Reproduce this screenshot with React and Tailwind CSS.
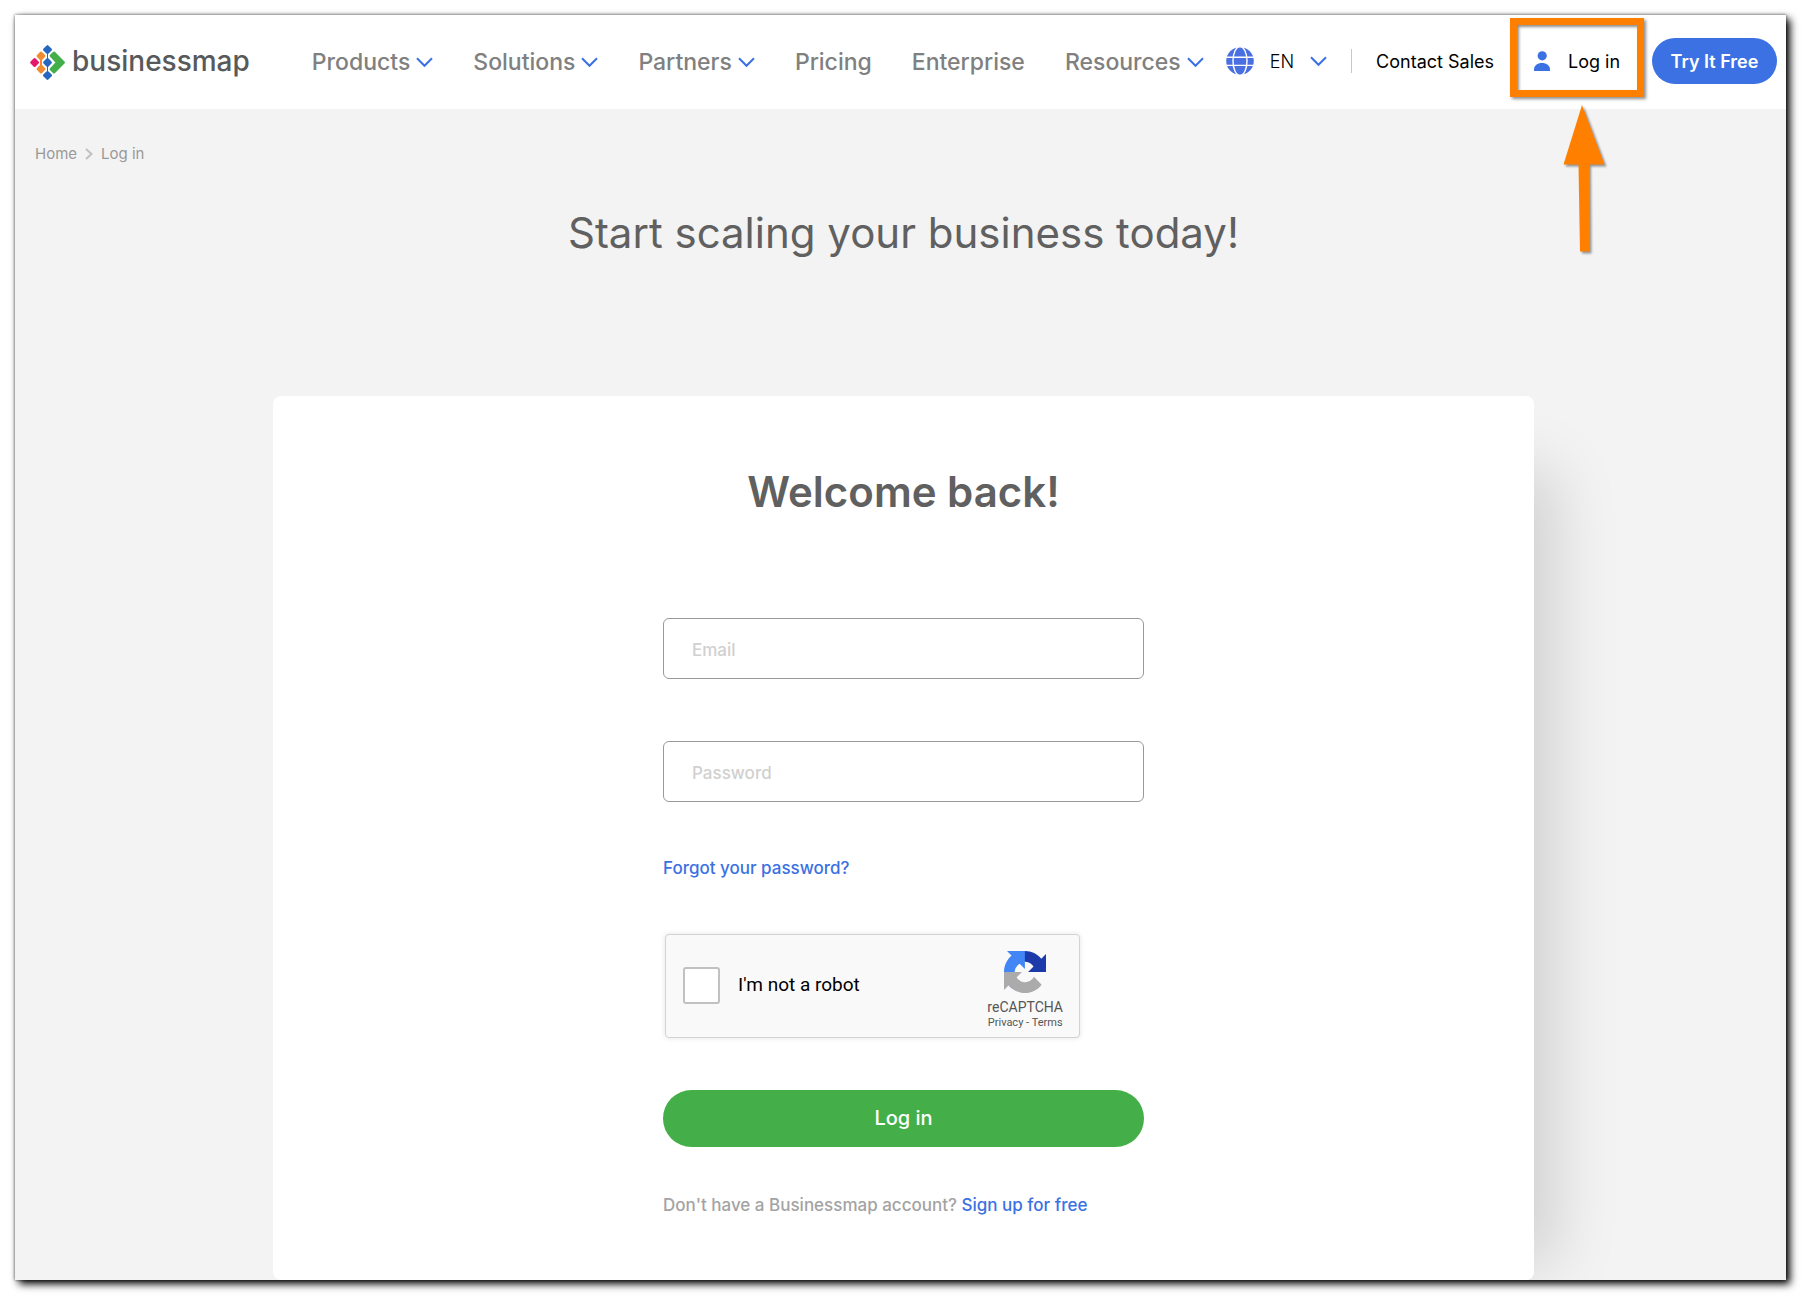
import React, { useState } from 'react';

const navItems = [
  { label: 'Products', menu: true },
  { label: 'Solutions', menu: true },
  { label: 'Partners', menu: true },
  { label: 'Pricing', menu: false },
  { label: 'Enterprise', menu: false },
  { label: 'Resources', menu: true },
];

const ChevronDown = () => (
  <svg width="17" height="11" viewBox="0 0 17 11" fill="none" className="shrink-0" aria-hidden="true">
    <path d="M1 1.2 8.5 8.8 16 1.2" stroke="#3b71e3" strokeWidth="2" />
  </svg>
);

const LogoMark = () => (
  <svg width="35" height="35" viewBox="0 0 35 35" className="shrink-0" aria-hidden="true">
    <path d="M17.5 4v27" stroke="#2767c0" strokeWidth="1" />
    <path d="M11 11v13" stroke="#f28a30" strokeWidth="2" />
    <g strokeLinejoin="round" strokeWidth="3">
      <path d="M17.5 1.7 20.4 4.6 17.5 7.5 14.6 4.6Z" fill="#2767c0" stroke="#2767c0" />
      <path d="M17.5 14.6 20.4 17.5 17.5 20.4 14.6 17.5Z" fill="#2767c0" stroke="#2767c0" />
      <path d="M17.5 27.5 20.4 30.4 17.5 33.3 14.6 30.4Z" fill="#2767c0" stroke="#2767c0" />
      <path d="M11 8.1 13.9 11 11 13.9 8.1 11Z" fill="#f28a30" stroke="#f28a30" />
      <path d="M11 21.1 13.9 24 11 26.9 8.1 24Z" fill="#f28a30" stroke="#f28a30" />
      <path d="M4.6 14.6 7.5 17.5 4.6 20.4 1.7 17.5Z" fill="#e6186d" stroke="#e6186d" />
      <path d="M24 8 33.4 17.5 24 27 21.2 24.2 27.4 17.5 21.2 10.8Z" fill="#43af49" stroke="#43af49" />
    </g>
  </svg>
);

const GlobeIcon = () => (
  <svg width="28" height="28" viewBox="0 0 28 28" className="shrink-0" aria-hidden="true">
    <circle cx="14" cy="14" r="13.8" fill="#4a6fe0" />
    <g fill="none" stroke="#fff" strokeWidth="1.4">
      <ellipse cx="14" cy="14" rx="7" ry="14.4" />
      <path d="M0 10.2h28M0 18.4h28" />
    </g>
  </svg>
);

const UserIcon = () => (
  <svg width="16" height="20" viewBox="0 0 16 20" fill="#3b71e3" className="shrink-0" aria-hidden="true">
    <circle cx="8.2" cy="4.8" r="4.6" />
    <path d="M0 20v-1.500C0 14.500 3.500 12 8 12s8 2.500 8 6.500V20Z" />
  </svg>
);

const RecaptchaLogo = () => (
  <svg width="42" height="42" viewBox="0 0 64 64" aria-hidden="true">
    <path fill="#1c3aa9" d="M64 31.955l-.033-1.370V4.687l-7.160 7.160C50.948 4.674 42.033.093 32.050.093c-10.400 0-19.622 4.960-25.458 12.640l11.736 11.860a15.550 15.550 0 0 1 4.754-5.334c2.050-1.600 4.952-2.906 8.968-2.906.485 0 .860.057 1.135.163 4.976.393 9.288 3.140 11.828 7.124l-8.307 8.307L64 31.953" />
    <path fill="#4285f4" d="M31.862.094l-1.370.033H4.594l7.160 7.160C4.580 13.147 0 22.060 0 32.046c0 10.400 4.960 19.622 12.640 25.458L24.500 45.768a15.550 15.550 0 0 1-5.334-4.754c-1.600-2.050-2.906-4.952-2.906-8.968 0-.485.057-.860.163-1.135.393-4.976 3.140-9.288 7.124-11.828l8.307 8.307L31.860.095" />
    <path fill="#ababab" d="M.001 32.045l.033 1.370v25.898l7.160-7.160c5.860 7.173 14.774 11.754 24.760 11.754 10.400 0 19.622-4.960 25.458-12.640l-11.736-11.860a15.550 15.550 0 0 1-4.754 5.334c-2.050 1.600-4.952 2.906-8.968 2.906-.485 0-.860-.057-1.135-.163-4.976-.393-9.288-3.140-11.828-7.124l8.307-8.307c-10.522.040-22.400.066-27.295-.005" />
  </svg>
);

const Header = () => (
  <header className="flex h-[94px] items-center bg-white pl-[15px] pr-[9px]">
    <a href="#home" className="flex items-center gap-[7px] text-[28px] font-medium text-[#58595b]">
      <LogoMark />
      <span className="pb-0.5">businessmap</span>
    </a>

    <nav className="ml-[62px] flex items-center gap-10 text-[23px] font-medium text-[#808080]">
      {navItems.map((item) => (
        <a key={item.label} href={`#${item.label.toLowerCase()}`} className="flex items-center gap-1.5">
          {item.label}
          {item.menu && <ChevronDown />}
        </a>
      ))}
    </nav>

    <div className="ml-auto flex items-center pb-0.5 text-[18px] text-black">
      <button type="button" aria-label="Language" className="flex items-center gap-4 font-light">
        <GlobeIcon />
        <span>EN</span>
        <ChevronDown />
      </button>
      <span className="mx-6 h-6 w-px bg-[#c8c8c8]" />
      <a href="#contact">Contact Sales</a>
      <div className="relative ml-4 flex h-[79px] w-[134px] items-center justify-center">
        <a href="#login" className="flex items-center gap-[18px]">
          <UserIcon />
          Log in
        </a>
        <Highlight />
      </div>
      <a href="#trial" className="ml-2 flex h-[46px] w-[125px] items-center justify-center rounded-full bg-[#3b71e3] font-semibold text-white">
        Try It Free
      </a>
    </div>
  </header>
);

// Orange frame and arrow pointing at the log in link
const Highlight = () => (
  <div className="pointer-events-none absolute inset-x-0 -top-1 bottom-1 z-10 border-[7px] border-[#ff8000] shadow-[2px_2px_3px_rgba(0,0,0,0.45),inset_2px_2px_3px_rgba(0,0,0,0.45)]">
    <svg
      width="42"
      height="147"
      viewBox="0 0 42 147"
      className="absolute left-[46px] top-20 overflow-visible drop-shadow-[2px_2px_1px_rgba(0,0,0,0.4)]"
      aria-hidden="true"
    >
      <path d="M19 0 41.500 59.500H26L26.500 146.500H17L15.500 59.500H0.500Z" fill="#ff8000" />
    </svg>
  </div>
);

const Recaptcha = ({ checked, onChange }) => (
  <div className="mx-0.5 flex h-[104px] w-[415px] items-center justify-between rounded border border-[#d3d3d3] bg-[#f9f9f9] pl-[17px] pr-4 font-['Roboto',sans-serif] shadow-[0_0_4px_1px_rgba(0,0,0,0.08)]">
    <label className="flex items-center gap-[18px] pb-0.5 text-[19px] text-black">
      <input
        type="checkbox"
        checked={checked}
        onChange={(e) => onChange(e.target.checked)}
        className="h-[37px] w-[37px] appearance-none rounded-[3px] border-2 border-[#c1c1c1] bg-white checked:bg-[#4285f4]"
      />
      I'm not a robot
    </label>
    <div className="flex flex-col items-center pt-2 text-[#555]">
      <RecaptchaLogo />
      <span className="mt-1 text-[14px] leading-5">reCAPTCHA</span>
      <span className="text-[11px] leading-3">
        <a href="#privacy">Privacy</a> - <a href="#terms">Terms</a>
      </span>
    </div>
  </div>
);

const LoginForm = () => {
  const [email, setEmail] = useState('');
  const [password, setPassword] = useState('');
  const [robot, setRobot] = useState(false);

  const handleSubmit = (e) => {
    e.preventDefault();
  };

  return (
    <form onSubmit={handleSubmit} className="mx-auto mt-[101px] w-full max-w-[481px]">
      <input
        type="email"
        aria-label="Email"
        placeholder="Email"
        value={email}
        onChange={(e) => setEmail(e.target.value)}
        className="block h-[61px] w-full rounded-md border border-[#999] px-7 pt-0.5 text-[17px] font-medium placeholder:text-[#d0d0d0]"
      />
      <input
        type="password"
        aria-label="Password"
        placeholder="Password"
        value={password}
        onChange={(e) => setPassword(e.target.value)}
        className="mt-[62px] block h-[61px] w-full rounded-md border border-[#999] px-7 pt-0.5 text-[17px] font-medium placeholder:text-[#d0d0d0]"
      />
      <a href="#forgot" className="my-[52px] block w-fit text-[17px] leading-7 font-medium text-[#3b71e3]">
        Forgot your password?
      </a>
      <Recaptcha checked={robot} onChange={setRobot} />
      <button type="submit" className="mt-[52px] h-[57px] w-full rounded-full bg-[#44af49] pb-0.5 text-[20px] font-medium text-white">
        Log in
      </button>
      <p className="mt-11 text-[17px] leading-7 font-medium text-[#a3a3a3]">
        Don't have a Businessmap account?{' '}
        <a href="#signup" className="text-[#3b71e3]">Sign up for free</a>
      </p>
    </form>
  );
};

const App = () => {
  return (
    <div className="flex min-h-screen flex-col bg-white pt-[15px] pr-[27px] pb-[27px] pl-[15px] font-['Inter',sans-serif]">
      <div className="flex flex-1 flex-col bg-[#f3f3f3] shadow-[0_0_3px_rgba(0,0,0,0.6),4px_4px_8px_#000]">
        <Header />
        <main className="flex flex-1 flex-col overflow-hidden">
          <div className="flex items-center gap-2 pt-[33px] pl-5 text-[15px] leading-6 text-[#999]">
            <a href="#home">Home</a>
            <svg width="8" height="12" viewBox="0 0 8 12" fill="none" aria-hidden="true">
              <path d="M1 1 6.500 6 1 11" stroke="#c0c0c0" strokeWidth="2" />
            </svg>
            <a href="#login">Log in</a>
          </div>
          <h1 className="mt-[43px] pl-1.5 text-center text-[42px] leading-[48px] text-[#606060]">
            Start scaling your business today!
          </h1>
          <section className="mt-[139px] mr-[252px] ml-[258px] flex-1 rounded-lg bg-white px-6 pt-[71px] pb-14 shadow-[65px_30px_60px_-45px_rgba(0,0,0,0.15)]">
            <h2 className="text-center text-[42px] leading-[50px] font-semibold text-[#606060]">Welcome back!</h2>
            <LoginForm />
          </section>
        </main>
      </div>
    </div>
  );
};

export default App;
